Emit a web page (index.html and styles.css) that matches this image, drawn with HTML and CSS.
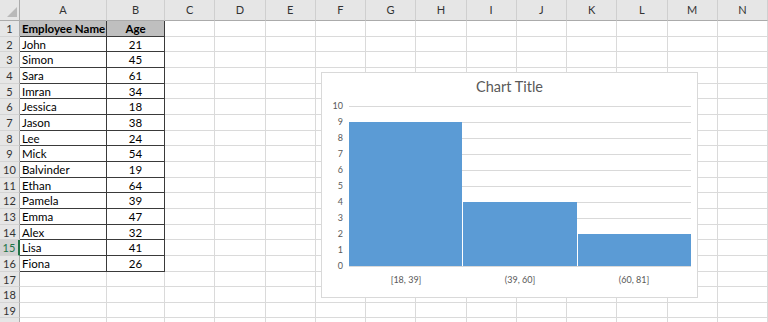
FILE: index.html
```html
<!DOCTYPE html>
<html lang="en">
<head>
  <meta charset="UTF-8">
  <title>Age Histogram</title>
  <link rel="stylesheet" href="styles.css">
</head>
<body>
  <div class="workbook">
    <div id="sheet"></div>

    <div class="chart">
      <div class="chart-title">Chart Title</div>
      <div class="chart-body">
        <div class="y-axis" id="yAxis"></div>
        <div class="plot">
          <div class="bars" id="bars"></div>
        </div>
      </div>
      <div class="x-axis" id="xAxis"></div>
    </div>
  </div>

<script>
  const cols = ['A', 'B', 'C', 'D', 'E', 'F', 'G', 'H', 'I', 'J', 'K', 'L', 'M', 'N'];
  const data = [
    ['Employee Name', 'Age'],
    ['John', 21], ['Simon', 45], ['Sara', 61], ['Imran', 34], ['Jessica', 18],
    ['Jason', 38], ['Lee', 24], ['Mick', 54], ['Balvinder', 19], ['Ethan', 64],
    ['Pamela', 39], ['Emma', 47], ['Alex', 32], ['Lisa', 41], ['Fiona', 26]
  ];
  const bins = [
    { label: '[18, 39]', count: 9 },
    { label: '(39, 60]', count: 4 },
    { label: '(60, 81]', count: 2 }
  ];
  const sheet = document.getElementById('sheet');

  function add(parent, cls, text) {
    const d = document.createElement('div');
    d.className = cls;
    d.textContent = text;
    parent.appendChild(d);
    return d;
  }

  add(sheet, 'corner', '');
  cols.forEach(c => add(sheet, 'col-head', c));
  // row 20 only peeks in at the bottom edge, so no label for it
  for (let r = 1; r <= 20; r++) {
    add(sheet, r === 15 ? 'row-head active' : 'row-head', r < 20 ? r : '');
    cols.forEach((c, i) => {
      const row = data[r - 1];
      if (row && i < 2) {
        let cls = 'cell t ' + (i === 0 ? 'name' : 'num');
        if (r === 1) cls += ' th';
        add(sheet, cls, row[i]);
      } else {
        add(sheet, 'cell', '');
      }
    });
  }

  // chart
  const yAxis = document.getElementById('yAxis');
  for (let v = 10; v >= 0; v--) add(yAxis, 'y-label', v);
  const bars = document.getElementById('bars');
  const xAxis = document.getElementById('xAxis');
  bins.forEach(b => {
    const bar = add(bars, 'bar', '');
    bar.style.height = (b.count * 16) + 'px';
    add(xAxis, 'x-label', b.label);
  });
</script>
</body>
</html>
```

FILE: styles.css
```css
* { box-sizing: border-box; margin: 0; padding: 0; }

body {
  font-family: Lato, "Liberation Sans", sans-serif;
  background-color: #fff;
  color: #000;
  overflow: hidden;
}

.workbook {
  position: relative;
  width: 768px;
  height: 322px;
  overflow: hidden;
}

#sheet {
  display: grid;
  grid-template-columns: 20px 87px 58px repeat(12, 1fr);
  grid-template-rows: 21px repeat(20, 15.67px);
  width: 768px;
}

.corner {
  position: relative;
  background-color: #e6e6e6;
  border-right: 1px solid #ababab;
  border-bottom: 1px solid #ababab;
}

.corner::after {
  content: "";
  position: absolute;
  right: 2px;
  bottom: 3px;
  width: 0;
  height: 0;
  border-left: 10px solid transparent;
  border-bottom: 10px solid #b9b9b9;
}

.col-head {
  background-color: #e6e6e6;
  border-right: 1px solid #cfcfcf;
  border-bottom: 1px solid #ababab;
  color: #333;
  font-size: 11px;
  text-align: center;
  line-height: 20px;
}

.row-head {
  background-color: #e6e6e6;
  border-right: 1px solid #ababab;
  border-bottom: 1px solid #d4d4d4;
  color: #333;
  font-size: 11px;
  text-align: center;
  line-height: 15px;
}

.row-head.active {
  background-color: #d2d2d2;
  color: #217346;
  border-right: 2px solid #217346;
}

.cell {
  border-right: 1px solid #dadada;
  border-bottom: 1px solid #dadada;
  font-size: 11.5px;
  line-height: 15px;
  white-space: nowrap;
  overflow: hidden;
}

.cell.t {
  border-right-color: #3a3a3a;
  border-bottom-color: #3a3a3a;
}

.cell.name {
  padding-left: 2px;
}

.cell.num {
  text-align: center;
}

.cell.th {
  background-color: #bfbfbf;
  font-weight: bold;
}

/* floating chart */
.chart {
  position: absolute;
  left: 321px;
  top: 72px;
  width: 377px;
  height: 226px;
  background-color: #fff;
  border: 1px solid #d9d9d9;
  display: flex;
  flex-direction: column;
}

.chart-title {
  text-align: center;
  font-size: 14.5px;
  color: #595959;
  padding-top: 5px;
  height: 33px;
}

.chart-body {
  display: flex;
  padding-right: 6px;
}

.y-axis {
  width: 27px;
  margin-top: -8px;
  padding-right: 6px;
  display: flex;
  flex-direction: column;
}

.y-label {
  height: 16px;
  line-height: 16px;
  font-size: 9px;
  color: #595959;
  text-align: right;
}

.plot {
  flex: 1;
  height: 161px;
  background: repeating-linear-gradient(to bottom, #d9d9d9 0 1px, transparent 1px 16px);
  border-bottom: 1px solid #d9d9d9;
}

.bars {
  height: 160px;
  display: flex;
  align-items: flex-end;
}

.bar {
  flex: 1;
  background-color: #5b9bd5;
  border-left: 1px solid #fff;
}

.bar:first-child {
  border-left: none;
}

.x-axis {
  display: flex;
  margin-left: 27px;
  margin-right: 6px;
  padding-top: 0;
}

.x-label {
  flex: 1;
  text-align: center;
  font-size: 9px;
  color: #595959;
}
```
